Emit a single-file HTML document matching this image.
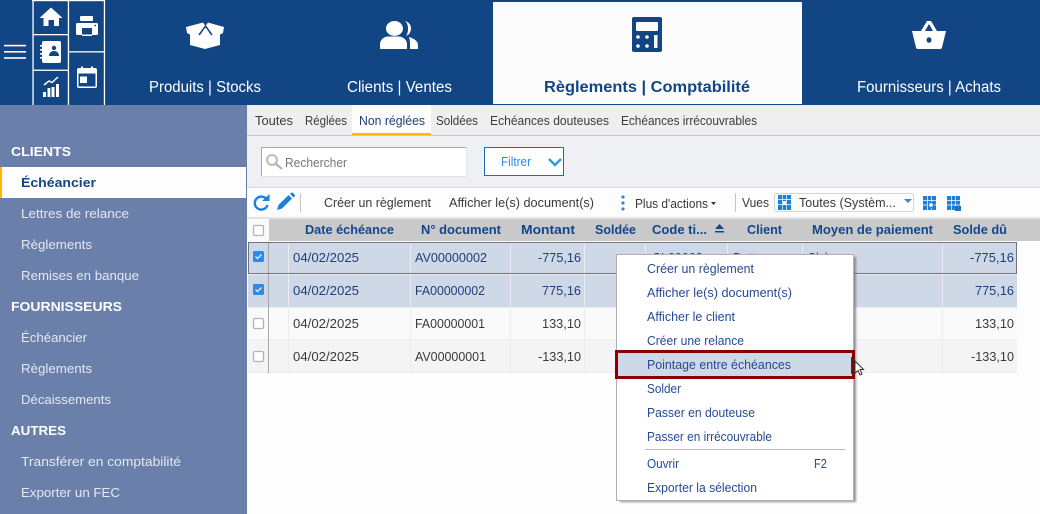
<!DOCTYPE html>
<html lang="fr"><head><meta charset="utf-8"><title>Règlements | Comptabilité</title>
<style>
html,body{margin:0;padding:0;background:#fdfdfd;width:1040px;height:514px;overflow:hidden}
svg{display:block}
text{font-family:"Liberation Sans",sans-serif;font-size:12.5px;white-space:pre}
.h{font-size:15.5px;fill:#fff}
.b{font-weight:bold}
.sh{fill:#fff;font-weight:bold}
.si{fill:#e3e8f1}
.t{fill:#3c3c3c}
.th{fill:#14468a;font-weight:bold}
.bl{fill:#1f3f78}
.dk{fill:#3a3a3a}
.m{fill:#254a96}
</style></head><body>
<svg width="1040" height="514" viewBox="0 0 1040 514" xmlns="http://www.w3.org/2000/svg">
<defs><filter id="s" x="-5%" y="-5%" width="110%" height="110%"><feGaussianBlur stdDeviation="1"/></filter></defs>
<!-- header -->
<rect width="1040" height="105" fill="#114583"/>
<rect x="493" y="2" width="309" height="102" fill="#fcfcfc"/>
<g fill="#fff">
<rect x="32" y="0" width="73" height="1.200"/>
<rect x="32.400" y="0" width="1.300" height="105"/><rect x="67.800" y="0" width="1.300" height="105"/><rect x="103.800" y="0" width="1.300" height="105"/>
<rect x="33" y="34" width="35" height="1.300"/><rect x="33" y="69.600" width="35" height="1.300"/><rect x="69" y="51.200" width="35" height="1.300"/>
<rect x="4" y="44.800" width="22" height="1.600"/><rect x="4" y="51" width="22" height="1.600"/><rect x="4" y="57.200" width="22" height="1.600"/>
<!-- home -->
<path d="M51 7.500 L62.500 18 L59 18 L59 26 L54 26 L54 20 L48.500 20 L48.500 26 L43.500 26 L43.500 18 L39.500 18Z"/>
<!-- printer -->
<rect x="80" y="16" width="13" height="5" rx="1"/>
<rect x="76" y="23" width="22" height="12" rx="1.500"/>
<rect x="82" y="33" width="10" height="3"/>
<!-- contacts -->
<path d="M44 41h15a2 2 0 0 1 2 2v18a2 2 0 0 1-2 2H44a2 2 0 0 1-2-2V43a2 2 0 0 1 2-2z"/>
<rect x="40" y="45" width="4" height="1.600"/><rect x="40" y="49" width="4" height="1.600"/><rect x="40" y="53" width="4" height="1.600"/><rect x="40" y="57" width="4" height="1.600"/>
<!-- chart -->
<rect x="43" y="92" width="3" height="5"/><rect x="47.500" y="88" width="2.800" height="9"/><rect x="51.500" y="87" width="3" height="10"/><rect x="56" y="84" width="3" height="13"/>
<path d="M44 85l5-4 3 1.500 6-5.500" fill="none" stroke="#fff" stroke-width="1.500"/>
<!-- calendar -->
<path d="M79 68h2v-1.500h2V68h8v-1.500h2V68h2a2 2 0 0 1 2 2v16a2 2 0 0 1-2 2H79a2 2 0 0 1-2-2V70a2 2 0 0 1 2-2z M78.500 73.500V86.500h17V73.500z" fill-rule="evenodd"/>
<rect x="80" y="76.500" width="7" height="6.500"/>
<!-- box -->
<path d="M186 27l17-4.500 2.500 3.500 2.500-3.500 16 4.500-1 6-3 1.500v10.500l-15 4-15-4V34.500l-3-1.500z"/>
<!-- people -->
<ellipse cx="394.500" cy="28.500" rx="8.500" ry="7.500"/>
<path d="M380 49v-5c0-4 4-7.500 8-7.500h11c4 0 8 3.500 8 7.500v5z"/>
<path d="M405 21c4 1 6 4 6 7.500s-2 6.500-5 7.500c1.500-2 2-4.500 2-7.500s-1-6-3-7.500z M409 37c5 1.500 9 4 9 8v4h-8v-5c0-3-.5-5-1-7z"/>
<!-- basket -->
<path d="M912 31h9l6-10h4l6 10h9l-4 16.500q-.3 1.500-2 1.500h-22q-1.700 0-2-1.500z M925 31h8l-4-7z" fill-rule="evenodd"/>
</g>
<!-- dark icon details -->
<rect x="82" y="28" width="10" height="6.500" fill="#114583"/>
<rect x="94.500" y="24.800" width="1.500" height="1.500" fill="#114583"/>
<path d="M199 35l6.500-9 6.500 9" fill="none" stroke="#114583" stroke-width="1.500"/>
<ellipse cx="929" cy="40" rx="2.500" ry="2.800" fill="#114583"/>
<circle cx="54" cy="48" r="2.200" fill="#114583"/><path d="M49 56c0-3 2-5 5-5s5 2 5 5z" fill="#114583"/>
<!-- calculator -->
<path d="M634 17h26a2 2 0 0 1 2 2v31a2 2 0 0 1-2 2h-26a2 2 0 0 1-2-2V19a2 2 0 0 1 2-2z" fill="#114583"/>
<rect x="636" y="22" width="22" height="9" fill="#fcfcfc" rx="1"/>
<g fill="#fcfcfc"><circle cx="638" cy="37" r="1.800"/><circle cx="647" cy="37" r="1.800"/><circle cx="638" cy="46" r="1.800"/><circle cx="647" cy="46" r="1.800"/><rect x="654" y="35" width="3.500" height="13"/></g>
<text x="149" y="92" class="h" textLength="112" lengthAdjust="spacingAndGlyphs">Produits | Stocks</text>
<text x="347" y="92" class="h" textLength="105" lengthAdjust="spacingAndGlyphs">Clients | Ventes</text>
<text x="544" y="92" class="h b" style="fill:#114583" textLength="206" lengthAdjust="spacingAndGlyphs">Règlements | Comptabilité</text>
<text x="857" y="92" class="h" textLength="144" lengthAdjust="spacingAndGlyphs">Fournisseurs | Achats</text>

<!-- sidebar -->
<rect y="105" width="247" height="409" fill="#6a80aa"/>
<rect y="167" width="246" height="31" fill="#fdfdfd"/>
<rect y="167" width="2" height="31" fill="#ffb900"/>
<text x="11" y="156" class="sh" textLength="60" lengthAdjust="spacingAndGlyphs">CLIENTS</text>
<text x="21" y="187" class="b" style="fill:#114583" textLength="75" lengthAdjust="spacingAndGlyphs">Échéancier</text>
<text x="21" y="218" class="si" textLength="108" lengthAdjust="spacingAndGlyphs">Lettres de relance</text>
<text x="21" y="249" class="si" textLength="71" lengthAdjust="spacingAndGlyphs">Règlements</text>
<text x="21" y="280" class="si" textLength="118" lengthAdjust="spacingAndGlyphs">Remises en banque</text>
<text x="11" y="311" class="sh" textLength="111" lengthAdjust="spacingAndGlyphs">FOURNISSEURS</text>
<text x="21" y="342" class="si" textLength="66" lengthAdjust="spacingAndGlyphs">Échéancier</text>
<text x="21" y="373" class="si" textLength="71" lengthAdjust="spacingAndGlyphs">Règlements</text>
<text x="21" y="404" class="si" textLength="90" lengthAdjust="spacingAndGlyphs">Décaissements</text>
<text x="11" y="435" class="sh" textLength="55" lengthAdjust="spacingAndGlyphs">AUTRES</text>
<text x="21" y="466" class="si" textLength="160" lengthAdjust="spacingAndGlyphs">Transférer en comptabilité</text>
<text x="21" y="497" class="si" textLength="99" lengthAdjust="spacingAndGlyphs">Exporter un FEC</text>

<!-- tabs -->
<rect x="247" y="105" width="793" height="30" fill="#efefef"/>
<rect x="247" y="135" width="793" height="1" fill="#c8c8c8"/>
<rect x="352" y="105" width="79" height="28" fill="#fdfdfd"/>
<rect x="352" y="133" width="79" height="2" fill="#ffb900"/>
<text x="255" y="125" class="t" textLength="38" lengthAdjust="spacingAndGlyphs">Toutes</text>
<text x="305" y="125" class="t" textLength="42" lengthAdjust="spacingAndGlyphs">Réglées</text>
<text x="359" y="125" style="fill:#1f3f78" textLength="66" lengthAdjust="spacingAndGlyphs">Non réglées</text>
<text x="436" y="125" class="t" textLength="42" lengthAdjust="spacingAndGlyphs">Soldées</text>
<text x="490" y="125" class="t" textLength="119" lengthAdjust="spacingAndGlyphs">Echéances douteuses</text>
<text x="621" y="125" class="t" textLength="136" lengthAdjust="spacingAndGlyphs">Echéances irrécouvrables</text>

<!-- filter bar -->
<rect x="247" y="136" width="793" height="51" fill="#eff0f4"/>
<rect x="247" y="187" width="793" height="1" fill="#d8d8d8"/>
<rect x="261.500" y="147.500" width="205" height="29" fill="#fff" stroke="#e2e2e2"/>
<path d="M261.500 176V147.500H466" fill="none" stroke="#a8a8a8"/>
<circle cx="272" cy="160" r="5" fill="none" stroke="#b4b4b4" stroke-width="1.800"/><path d="M276 164l6 5" stroke="#b4b4b4" stroke-width="2.200"/>
<text x="285" y="167" fill="#777" textLength="62" lengthAdjust="spacingAndGlyphs">Rechercher</text>
<rect x="484.500" y="147.500" width="79" height="28" fill="#fff" stroke="#1c6bb8"/>
<text x="501" y="166" fill="#2e8ae6" textLength="30" lengthAdjust="spacingAndGlyphs">Filtrer</text>
<path d="M549 159l6 6 6-6" fill="none" stroke="#2e9be6" stroke-width="2.500"/>

<!-- toolbar -->
<rect x="247" y="188" width="793" height="29" fill="#fdfdfd"/>
<rect x="247" y="217" width="793" height="2" fill="#e3e3e3"/>
<path d="M267 200a6.500 6.500 0 1 0 .5 5" fill="none" stroke="#1f7fd8" stroke-width="2.400"/><path d="M262 201h7.500v-7z" fill="#1f7fd8"/>
<path d="M277 210l1.500-5 10-10 3.500 3.500-10 10z M290 194l1-1q1-1 2 0l1.500 1.500q1 1 0 2l-1 1z" fill="#1f7fd8"/>
<rect x="300" y="193" width="1" height="19" fill="#c4c4c4"/>
<text x="324" y="207" class="dk" textLength="107" lengthAdjust="spacingAndGlyphs">Créer un règlement</text>
<text x="449" y="207" class="dk" textLength="145" lengthAdjust="spacingAndGlyphs">Afficher le(s) document(s)</text>
<g fill="#3b84cc"><circle cx="623" cy="197" r="1.600"/><circle cx="623" cy="203" r="1.600"/><circle cx="623" cy="209" r="1.600"/></g>
<text x="635" y="208" class="dk" textLength="73" lengthAdjust="spacingAndGlyphs">Plus d'actions</text>
<path d="M711 202h5l-2.500 3z" fill="#333"/>
<rect x="735" y="193" width="1" height="19" fill="#c4c4c4"/>
<text x="742" y="207" class="dk" textLength="27" lengthAdjust="spacingAndGlyphs">Vues</text>
<rect x="774.500" y="193.500" width="139" height="18" rx="2" fill="#fdfdfd" stroke="#cfd6e0"/>
<rect x="778" y="195" width="13" height="15" fill="#1f7fd8"/>
<path d="M782.500 195v15M786.500 195v15M778 199.500h13M778 204.500h13" stroke="#fff" stroke-width=".7"/>
<rect x="783" y="201" width="3" height="4" fill="#fff"/>
<text x="799" y="207" class="dk" textLength="97" lengthAdjust="spacingAndGlyphs">Toutes (Systèm...</text>
<path d="M904 199h8l-4 4z" fill="#3b84cc"/>
<rect x="923" y="196" width="13" height="14" fill="#1f7fd8"/>
<path d="M927.500 196v14M931.500 196v14M923 200.500h13M923 205h13" stroke="#fff" stroke-width=".7"/>
<circle cx="931" cy="205" r="2.500" fill="#fff" stroke="#1f7fd8" stroke-width="1.200"/>
<rect x="947" y="196" width="13" height="14" fill="#1f7fd8"/>
<path d="M951.500 196v14M955.500 196v14M947 200.500h13M947 205h13" stroke="#fff" stroke-width=".7"/>
<rect x="955" y="206" width="6" height="5" fill="#2c6cb0"/>

<!-- table header -->
<rect x="248" y="219" width="792" height="22" fill="#c9c9c9"/>
<rect x="248" y="219" width="21" height="22" fill="#fafafa"/>
<rect x="253.500" y="225.500" width="10" height="10" rx="1.500" fill="#fff" stroke="#b2b2b2" stroke-width="1.300"/>
<text x="305" y="234" class="th" textLength="89" lengthAdjust="spacingAndGlyphs">Date échéance</text>
<text x="421" y="234" class="th" textLength="80" lengthAdjust="spacingAndGlyphs">N° document</text>
<text x="521" y="234" class="th" textLength="54" lengthAdjust="spacingAndGlyphs">Montant</text>
<text x="595" y="234" class="th" textLength="41" lengthAdjust="spacingAndGlyphs">Soldée</text>
<text x="652" y="234" class="th" textLength="55" lengthAdjust="spacingAndGlyphs">Code ti...</text>
<path d="M715 229l4.500-5 4.500 5z M715 231h9v1.500h-9z" fill="#14468a"/>
<text x="747" y="234" class="th" textLength="35" lengthAdjust="spacingAndGlyphs">Client</text>
<text x="812" y="234" class="th" textLength="121" lengthAdjust="spacingAndGlyphs">Moyen de paiement</text>
<text x="953" y="234" class="th" textLength="54" lengthAdjust="spacingAndGlyphs">Solde dû</text>

<!-- rows -->
<rect x="248" y="242" width="769" height="33" fill="#cfd8e6"/>
<rect x="248" y="275" width="769" height="33" fill="#cfd8e6"/>
<rect x="248" y="308" width="769" height="32" fill="#fafafa"/>
<rect x="248" y="340" width="769" height="33" fill="#f4f4f4"/>
<g fill="#e9ecf2">
<rect x="288" y="242" width="1" height="66"/><rect x="410" y="242" width="1" height="66"/><rect x="510" y="242" width="1" height="66"/><rect x="584" y="242" width="1" height="66"/><rect x="645" y="242" width="1" height="66"/><rect x="727" y="242" width="1" height="66"/><rect x="802" y="242" width="1" height="66"/><rect x="942" y="242" width="1" height="66"/>
<rect x="248" y="274" width="769" height="1"/><rect x="248" y="307" width="769" height="1"/>
</g>
<g fill="#ececec">
<rect x="288" y="308" width="1" height="65"/><rect x="410" y="308" width="1" height="65"/><rect x="510" y="308" width="1" height="65"/><rect x="584" y="308" width="1" height="65"/><rect x="942" y="308" width="1" height="65"/>
<rect x="248" y="339" width="769" height="1"/><rect x="248" y="372" width="769" height="1"/>
</g>
<rect x="268" y="242" width="1" height="131" fill="#a8a8a8"/>
<rect x="248.500" y="242.500" width="768" height="31" fill="none" stroke="#111" stroke-dasharray="1 1" shape-rendering="crispEdges"/>
<rect x="253" y="251" width="11" height="11" rx="1.500" fill="#2e8ae6"/><path d="M255.500 256.500l2 2 4-4" fill="none" stroke="#fff" stroke-width="1.200"/>
<rect x="253" y="284" width="11" height="11" rx="1.500" fill="#2e8ae6"/><path d="M255.500 289.500l2 2 4-4" fill="none" stroke="#fff" stroke-width="1.200"/>
<rect x="253.500" y="318.500" width="10" height="10" rx="1.500" fill="#fff" stroke="#b2b2b2" stroke-width="1.300"/>
<rect x="253.500" y="351.500" width="10" height="10" rx="1.500" fill="#fff" stroke="#b2b2b2" stroke-width="1.300"/>

<text x="293" y="262" class="bl" textLength="66" lengthAdjust="spacingAndGlyphs">04/02/2025</text>
<text x="415" y="262" class="bl" textLength="72" lengthAdjust="spacingAndGlyphs">AV00000002</text>
<text x="538" y="262" class="bl" textLength="43" lengthAdjust="spacingAndGlyphs">-775,16</text>
<text x="652" y="262" class="bl">CL00002</text>
<text x="733" y="262" class="bl">Dutton</text>
<text x="807" y="262" class="bl">Chèque</text>
<text x="970" y="262" class="bl" textLength="44" lengthAdjust="spacingAndGlyphs">-775,16</text>
<text x="293" y="295" class="bl" textLength="66" lengthAdjust="spacingAndGlyphs">04/02/2025</text>
<text x="415" y="295" class="bl" textLength="70" lengthAdjust="spacingAndGlyphs">FA00000002</text>
<text x="542" y="295" class="bl" textLength="39" lengthAdjust="spacingAndGlyphs">775,16</text>
<text x="975" y="295" class="bl" textLength="39" lengthAdjust="spacingAndGlyphs">775,16</text>
<text x="293" y="328" class="dk" textLength="66" lengthAdjust="spacingAndGlyphs">04/02/2025</text>
<text x="415" y="328" class="dk" textLength="70" lengthAdjust="spacingAndGlyphs">FA00000001</text>
<text x="542" y="328" class="dk" textLength="39" lengthAdjust="spacingAndGlyphs">133,10</text>
<text x="975" y="328" class="dk" textLength="39" lengthAdjust="spacingAndGlyphs">133,10</text>
<text x="293" y="361" class="dk" textLength="66" lengthAdjust="spacingAndGlyphs">04/02/2025</text>
<text x="415" y="361" class="dk" textLength="71" lengthAdjust="spacingAndGlyphs">AV00000001</text>
<text x="538" y="361" class="dk" textLength="43" lengthAdjust="spacingAndGlyphs">-133,10</text>
<text x="971" y="361" class="dk" textLength="43" lengthAdjust="spacingAndGlyphs">-133,10</text>

<!-- context menu -->
<rect x="620" y="257" width="236" height="245" fill="#777" opacity=".8" filter="url(#s)"/>
<rect x="616.500" y="254.500" width="237" height="246" fill="#fff" stroke="#b0b0b0"/>
<rect x="616.500" y="351.500" width="237" height="26" fill="#cfd8e6" stroke="#8b0000" stroke-width="3"/>
<rect x="851" y="357" width="1.500" height="17" fill="#333"/>
<rect x="645" y="449" width="200" height="1" fill="#bdbdbd"/>
<text x="647" y="273" class="m" textLength="107" lengthAdjust="spacingAndGlyphs">Créer un règlement</text>
<text x="647" y="297" class="m" textLength="145" lengthAdjust="spacingAndGlyphs">Afficher le(s) document(s)</text>
<text x="647" y="321" class="m" textLength="88" lengthAdjust="spacingAndGlyphs">Afficher le client</text>
<text x="647" y="345" class="m" textLength="97" lengthAdjust="spacingAndGlyphs">Créer une relance</text>
<text x="647" y="369" class="m" textLength="144" lengthAdjust="spacingAndGlyphs">Pointage entre échéances</text>
<text x="647" y="393" class="m" textLength="34" lengthAdjust="spacingAndGlyphs">Solder</text>
<text x="647" y="417" class="m" textLength="108" lengthAdjust="spacingAndGlyphs">Passer en douteuse</text>
<text x="647" y="441" class="m" textLength="125" lengthAdjust="spacingAndGlyphs">Passer en irrécouvrable</text>
<text x="647" y="468" class="m" textLength="32" lengthAdjust="spacingAndGlyphs">Ouvrir</text>
<text x="814" y="468" class="m" textLength="13" lengthAdjust="spacingAndGlyphs">F2</text>
<text x="647" y="492" class="m" textLength="110" lengthAdjust="spacingAndGlyphs">Exporter la sélection</text>
<!-- cursor -->
<path d="M855 361v12l3-2.500 2 4.500 2-1-2-4.500h3.500z" fill="#fff" stroke="#333" stroke-width="1"/>
</svg>
</body></html>
